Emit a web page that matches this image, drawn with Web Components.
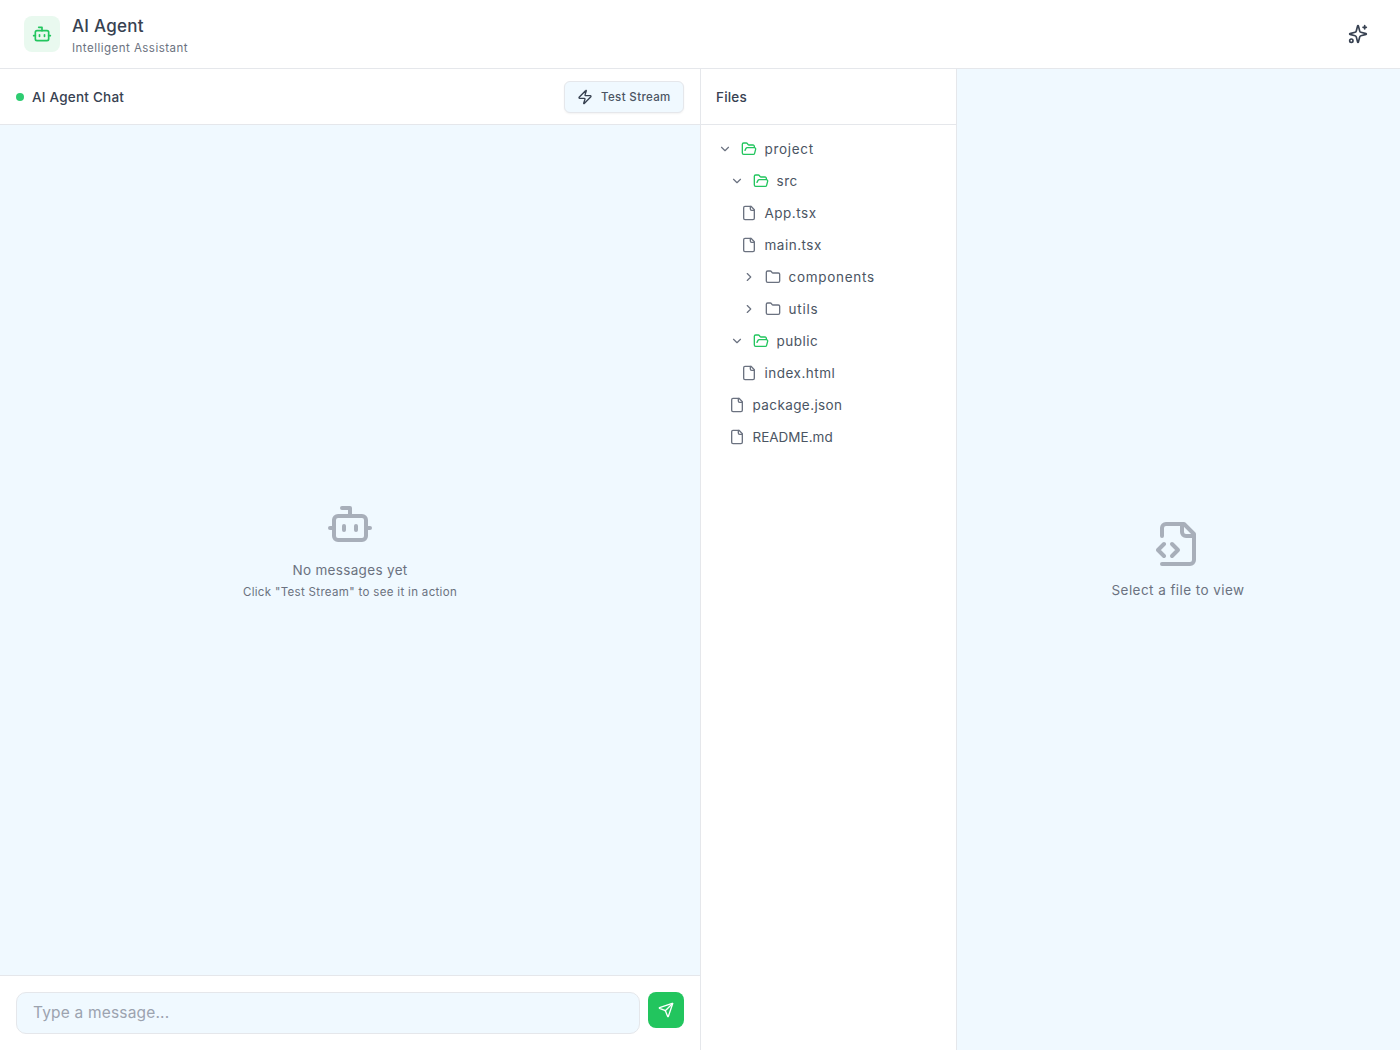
<!DOCTYPE html>
<html lang="en"><head><meta charset="utf-8"><title>AI Agent</title>
<style>
html,body{margin:0;height:100%;overflow:hidden;background:#fff}
body{font-family:Inter,"Liberation Sans",sans-serif;color:#374151}
</style></head><body>
<app-shell>
  <app-header slot="header"></app-header>
  <chat-panel slot="chat"></chat-panel>
  <file-tree slot="files">
    <tree-row depth="0" kind="open" style="letter-spacing:.7px">project</tree-row>
    <tree-row depth="1" kind="open">src</tree-row>
    <tree-row depth="2" kind="file">App.tsx</tree-row>
    <tree-row depth="2" kind="file">main.tsx</tree-row>
    <tree-row depth="2" kind="closed" style="letter-spacing:.7px">components</tree-row>
    <tree-row depth="2" kind="closed" style="letter-spacing:.75px">utils</tree-row>
    <tree-row depth="1" kind="open">public</tree-row>
    <tree-row depth="2" kind="file">index.html</tree-row>
    <tree-row depth="1" kind="file" style="letter-spacing:.4px">package.json</tree-row>
    <tree-row depth="1" kind="file" style="letter-spacing:0">README.md</tree-row>
  </file-tree>
  <viewer-panel slot="viewer"></viewer-panel>
</app-shell>
<script>
const ICONS={
bot:'<path d="M12 8V4H8"/><rect width="16" height="12" x="4" y="8" rx="2"/><path d="M2 14h2"/><path d="M20 14h2"/><path d="M15 13v2"/><path d="M9 13v2"/>',
sparkles:'<path d="M9.937 15.5A2 2 0 0 0 8.5 14.063l-6.135-1.582a.5.5 0 0 1 0-.962L8.5 9.936A2 2 0 0 0 9.937 8.5l1.582-6.135a.5.5 0 0 1 .963 0L14.063 8.5A2 2 0 0 0 15.5 9.937l6.135 1.581a.5.5 0 0 1 0 .964L15.5 14.063a2 2 0 0 0-1.437 1.437l-1.582 6.135a.5.5 0 0 1-.963 0z"/><path d="M20 2v4"/><path d="M22 4h-4"/><circle cx="4" cy="20" r="2"/>',
zap:'<path d="M4 14a1 1 0 0 1-.78-1.63l9.9-10.2a.5.5 0 0 1 .86.46l-1.92 6.02A1 1 0 0 0 13 10h7a1 1 0 0 1 .78 1.63l-9.9 10.2a.5.5 0 0 1-.86-.46l1.92-6.02A1 1 0 0 0 11 14z"/>',
open:'<path d="m6 14 1.5-2.9A2 2 0 0 1 9.24 10H20a2 2 0 0 1 1.94 2.5l-1.54 6a2 2 0 0 1-1.95 1.5H4a2 2 0 0 1-2-2V5a2 2 0 0 1 2-2h3.9a2 2 0 0 1 1.69.9l.81 1.2a2 2 0 0 0 1.67.9H18a2 2 0 0 1 2 2v2"/>',
closed:'<path d="M20 20a2 2 0 0 0 2-2V8a2 2 0 0 0-2-2h-7.9a2 2 0 0 1-1.69-.9L9.6 3.9A2 2 0 0 0 7.93 3H4a2 2 0 0 0-2 2v13a2 2 0 0 0 2 2Z"/>',
file:'<path d="M15 2H6a2 2 0 0 0-2 2v16a2 2 0 0 0 2 2h12a2 2 0 0 0 2-2V7Z"/><path d="M14 2v4a2 2 0 0 0 2 2h4"/>',
code:'<path d="M4 22h14a2 2 0 0 0 2-2V7l-5-5H6a2 2 0 0 0-2 2v4"/><path d="M14 2v4a2 2 0 0 0 2 2h4"/><path d="m5 12-3 3 3 3"/><path d="m9 18 3-3-3-3"/>',
send:'<path d="M14.536 21.686a.5.5 0 0 0 .937-.024l6.5-19a.496.496 0 0 0-.635-.635l-19 6.5a.5.5 0 0 0-.024.937l7.93 3.18a2 2 0 0 1 1.112 1.11z"/><path d="m21.854 2.147-10.94 10.939"/>',
down:'<path d="m6 9 6 6 6-6"/>',
right:'<path d="m9 18 6-6-6-6"/>'};
function def(name,html,setup){customElements.define(name,class extends HTMLElement{
  connectedCallback(){if(this.shadowRoot)return;const r=this.attachShadow({mode:'open'});r.innerHTML=typeof html==='function'?html(this):html;setup&&setup(r,this)}
})}
def('ui-icon',h=>{const s=h.getAttribute('size')||16;return `<style>:host{display:block;width:${s}px;height:${s}px;flex:none;color:${h.getAttribute('color')||'currentColor'}}svg{display:block}</style><svg xmlns="http://www.w3.org/2000/svg" width="${s}" height="${s}" viewBox="0 0 24 24" fill="none" stroke="currentColor" stroke-width="2" stroke-linecap="round" stroke-linejoin="round">${ICONS[h.getAttribute('name')]}</svg>`});
def('app-shell',`<style>
:host{display:grid;grid-template-columns:701px 256px 1fr;grid-template-rows:69px 1fr;width:1400px;height:1050px}
.h{grid-column:1/-1;display:block}
</style><slot name="header" class="h"></slot><slot name="chat"></slot><slot name="files"></slot><slot name="viewer"></slot>`);
def('app-header',`<style>
:host{display:flex;align-items:center;justify-content:space-between;height:69px;box-sizing:border-box;padding:0 24px;border-bottom:1px solid #e5e7eb;background:#fff}
.brand{display:flex;align-items:center;gap:12px}
.logo{width:36px;height:36px;border-radius:8px;background:#e9f9ef;display:flex;align-items:center;justify-content:center}
.txt{padding-top:2px}
h1{margin:0;font-size:17px;line-height:24px;font-weight:500;color:#374151;letter-spacing:.25px}
p{margin:2px 0 0;font-size:11.5px;line-height:16px;color:#6b7280;letter-spacing:.48px}
.act{width:36px;height:36px;display:flex;align-items:center;justify-content:center}
</style><div class="brand"><div class="logo"><ui-icon name="bot" size="20" color="#22c55e"></ui-icon></div><div class="txt"><h1>AI Agent</h1><p>Intelligent Assistant</p></div></div><div class="act"><ui-icon name="sparkles" size="20" color="#374151"></ui-icon></div>`);
def('chat-panel',`<style>
:host{display:flex;flex-direction:column;height:981px;box-sizing:border-box;border-right:1px solid #e5e7eb;background:#fff}
.top{height:56px;box-sizing:border-box;border-bottom:1px solid #e5e7eb;padding:0 16px;display:flex;align-items:center;justify-content:space-between}
.t{display:flex;align-items:center;gap:8px;font-size:13.5px;font-weight:500;color:#374151;letter-spacing:.23px}
.dot{width:8px;height:8px;border-radius:50%;background:#2ecc71}
button{font:inherit;display:flex;align-items:center;gap:8px;width:120px;height:32px;box-sizing:border-box;padding:0 12px;border:1px solid #e5e7eb;border-radius:6px;background:#f0f9ff;color:#4b5563;font-size:11.5px;font-weight:500;letter-spacing:.36px;box-shadow:0 1px 2px rgba(0,0,0,.05)}
.body{flex:1;background:#f0f9ff;display:flex;flex-direction:column;align-items:center;justify-content:center}
.ico{opacity:.85}
.a{margin:12px 0 0;font-size:13.5px;line-height:20px;color:#6b7280;letter-spacing:.33px}
.b{margin:4px 0 0;font-size:11.5px;line-height:16px;color:#6b7280;letter-spacing:.33px}
.bar{height:75px;box-sizing:border-box;border-top:1px solid #e5e7eb;padding:16px 16px 0;display:flex;gap:8px;align-items:flex-start}
input{flex:1;min-width:0;height:42px;box-sizing:border-box;padding:0 16px 2px;border:1px solid #e5e7eb;border-radius:10px;background:#f0f9ff;font:inherit;font-size:15.5px;letter-spacing:.18px;color:#374151;outline:none}
input::placeholder{color:#9ca3af;opacity:1}
.send{width:36px;height:36px;padding:0;justify-content:center;background:#22c55e;border:0;border-radius:8px;color:#fff;flex:none;box-shadow:none}
</style><div class="top"><div class="t"><span class="dot"></span>AI Agent Chat</div><button><ui-icon name="zap" size="16" color="#374151"></ui-icon>Test Stream</button></div>
<div class="body"><ui-icon class="ico" name="bot" size="48" color="#9ca3af"></ui-icon><p class="a">No messages yet</p><p class="b">Click "Test Stream" to see it in action</p></div>
<div class="bar"><input placeholder="Type a message..."><button class="send" aria-label="Send"><ui-icon name="send" size="16" color="#fff"></ui-icon></button></div>`);
def('file-tree',`<style>
:host{display:flex;flex-direction:column;height:981px;box-sizing:border-box;border-right:1px solid #e5e7eb;background:#fff;letter-spacing:.5px}
.top{height:56px;box-sizing:border-box;border-bottom:1px solid #e5e7eb;padding:0 15px;display:flex;align-items:center;font-size:13.5px;font-weight:500;color:#374151;flex:none;letter-spacing:.2px}
.list{padding:8px 0}
</style><div class="top">Files</div><div class="list"><slot></slot></div>`);
def('tree-row',h=>{const d=+h.getAttribute('depth'),k=h.getAttribute('kind');
 const left=16+d*12;
 const chev=k==='file'?'':`<span class="c"><ui-icon name="${k==='open'?'down':'right'}" size="14" color="#6b7280"></ui-icon></span>`;
 const ic=k==='open'?'<ui-icon name="open" size="16" color="#22c55e"></ui-icon>':`<ui-icon name="${k}" size="16" color="#6b7280"></ui-icon>`;
 return `<style>:host{display:flex;align-items:center;height:32px;padding-left:${left}px;font-size:13.5px;color:#4b5563}.c{width:16px;flex:none;display:flex;justify-content:center;margin-right:8px}.n{margin-left:7.5px}</style>${chev}${ic}<span class="n"><slot></slot></span>`});
def('viewer-panel',`<style>
:host{display:flex;flex-direction:column;align-items:center;justify-content:center;height:981px;background:#f0f9ff;padding-right:1px;box-sizing:border-box}
.ico{opacity:.85}
p{margin:12px 0 0;font-size:13.5px;line-height:20px;color:#6b7280;letter-spacing:.43px}
</style><ui-icon class="ico" name="code" size="48" color="#9ca3af"></ui-icon><p>Select a file to view</p>`);
</script>
</body></html>
